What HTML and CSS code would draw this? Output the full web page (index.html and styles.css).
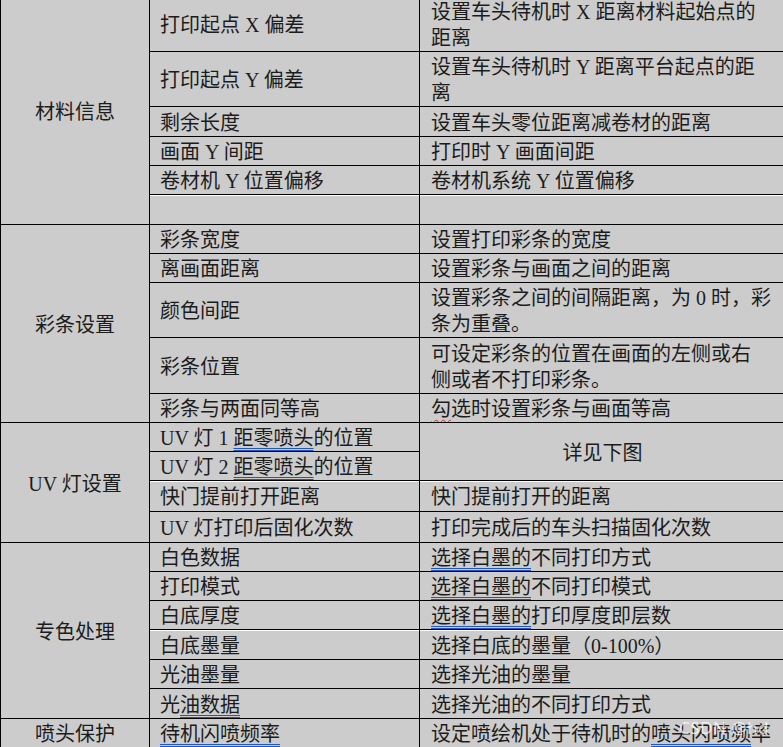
FILE: index.html
```html
<!DOCTYPE html>
<html lang="zh-CN">
<head>
<meta charset="utf-8">
<title>参数说明</title>
<link rel="stylesheet" href="styles.css">
</head>
<body>
<div class="page">
<table class="spec">
  <colgroup><col class="c1"><col class="c2"><col class="c3"></colgroup>
  <tr>
    <td class="group" rowspan="6">材料信息</td>
    <td class="name">打印起点 X 偏差</td>
    <td class="desc two">设置车头待机时 X 距离材料起始点的<br>距离</td>
  </tr>
  <tr>
    <td class="name">打印起点 Y 偏差</td>
    <td class="desc two">设置车头待机时 Y 距离平台起点的距<br>离</td>
  </tr>
  <tr class="r30">
    <td class="name">剩余长度</td>
    <td class="desc">设置车头零位距离减卷材的距离</td>
  </tr>
  <tr>
    <td class="name">画面 Y 间距</td>
    <td class="desc">打印时 Y 画面间距</td>
  </tr>
  <tr>
    <td class="name">卷材机 Y 位置偏移</td>
    <td class="desc">卷材机系统 Y 位置偏移</td>
  </tr>
  <tr class="split r30">
    <td class="name">&nbsp;</td>
    <td class="desc">&nbsp;</td>
  </tr>

  <tr>
    <td class="group" rowspan="5">彩条设置</td>
    <td class="name">彩条宽度</td>
    <td class="desc">设置打印彩条的宽度</td>
  </tr>
  <tr>
    <td class="name">离画面距离</td>
    <td class="desc">设置彩条与画面之间的距离</td>
  </tr>
  <tr>
    <td class="name">颜色间距</td>
    <td class="desc two">设置彩条之间的间隔距离，为 0 时，彩<br>条为重叠。</td>
  </tr>
  <tr class="r30">
    <td class="name">彩条位置</td>
    <td class="desc two">可设定彩条的位置在画面的左侧或右<br>侧或者不打印彩条。</td>
  </tr>
  <tr>
    <td class="name">彩条与两面同等高</td>
    <td class="desc"><span class="spell">勾</span>选时设置彩条与画面等高</td>
  </tr>

  <tr>
    <td class="group" rowspan="4">UV 灯设置</td>
    <td class="name">UV 灯 1 <span class="gram">距零喷头</span>的位置</td>
    <td class="desc center" rowspan="2">详见下图</td>
  </tr>
  <tr>
    <td class="name">UV 灯 2 <span class="gram">距零喷头</span>的位置</td>
  </tr>
  <tr class="split wide">
    <td class="name">快门提前打开距离</td>
    <td class="desc">快门提前打开的距离</td>
  </tr>
  <tr class="wide">
    <td class="name">UV 灯打印后固化次数</td>
    <td class="desc">打印完成后的车头扫描固化次数</td>
  </tr>

  <tr>
    <td class="group" rowspan="6">专色处理</td>
    <td class="name">白色数据</td>
    <td class="desc"><span class="gram">选择白墨的</span>不同打印方式</td>
  </tr>
  <tr>
    <td class="name">打印模式</td>
    <td class="desc"><span class="gram">选择白墨的</span>不同打印模式</td>
  </tr>
  <tr>
    <td class="name">白底厚度</td>
    <td class="desc"><span class="gram">选择白墨的</span>打印厚度即层数</td>
  </tr>
  <tr class="split r30">
    <td class="name">白底墨量</td>
    <td class="desc">选择白底的墨量（0-100%）</td>
  </tr>
  <tr>
    <td class="name">光油墨量</td>
    <td class="desc">选择光油的墨量</td>
  </tr>
  <tr class="r30">
    <td class="name">光<span class="gram">油数据</span></td>
    <td class="desc">选择光油的不同打印方式</td>
  </tr>

  <tr>
    <td class="group">喷头保护</td>
    <td class="name"><span class="gram">待机闪喷频率</span></td>
    <td class="desc">设定喷绘机处于待机时的<span class="gram">喷头闪喷频</span>率</td>
  </tr>
</table>
<span class="watermark">CSDN @hd</span>
</div>
</body>
</html>
```

FILE: styles.css
```css
html, body {
  margin: 0;
  padding: 0;
  overflow: hidden;
  background: #ffffff;
}

.page {
  position: relative;
  width: 783px;
  height: 747px;
  overflow: hidden;
}

.spec {
  border-collapse: separate;
  border-spacing: 0;
  table-layout: fixed;
  width: 785px;
  margin-top: -3px;
  background: #cccccc;
  border-left: 1px solid #000;
  font-family: "Liberation Serif", "Noto Sans CJK SC", serif;
  font-size: 20px;
  color: #1c1c1c;
}

.c1 { width: 149px; }
.c2 { width: 270px; }
.c3 { width: 366px; }

.spec td {
  border-right: 1px solid #000;
  border-bottom: 1px solid #000;
  padding: 2px 0 0 10px;
  line-height: 26px;
  vertical-align: middle;
  white-space: nowrap;
  overflow: hidden;
}

.spec tr.r30 td {
  padding-top: 3px;
}

.spec td.group {
  text-align: center;
  padding: 2px 0 0 0;
}

.spec td.desc {
  padding-left: 11px;
}

.spec td.center {
  text-align: center;
  padding-left: 0;
}

.spec tr.wide td {
  line-height: 28px;
}

.spec tr.split td {
  box-shadow: inset 0 1px 0 #ffffff;
}

.gram {
  text-decoration-line: underline;
  text-decoration-style: double;
  text-decoration-color: #1f57c8;
  text-decoration-thickness: 1px;
  text-underline-offset: 3px;
}

.spell {
  text-decoration-line: underline;
  text-decoration-style: wavy;
  text-decoration-color: #e02020;
  text-decoration-thickness: 1px;
  text-underline-offset: 3px;
}

.watermark {
  position: absolute;
  right: 14px;
  bottom: 8px;
  font-family: "Noto Sans", "Noto Sans CJK SC", sans-serif;
  font-size: 17px;
  color: rgba(255, 255, 255, 0.75);
  letter-spacing: 0.5px;
}
```
